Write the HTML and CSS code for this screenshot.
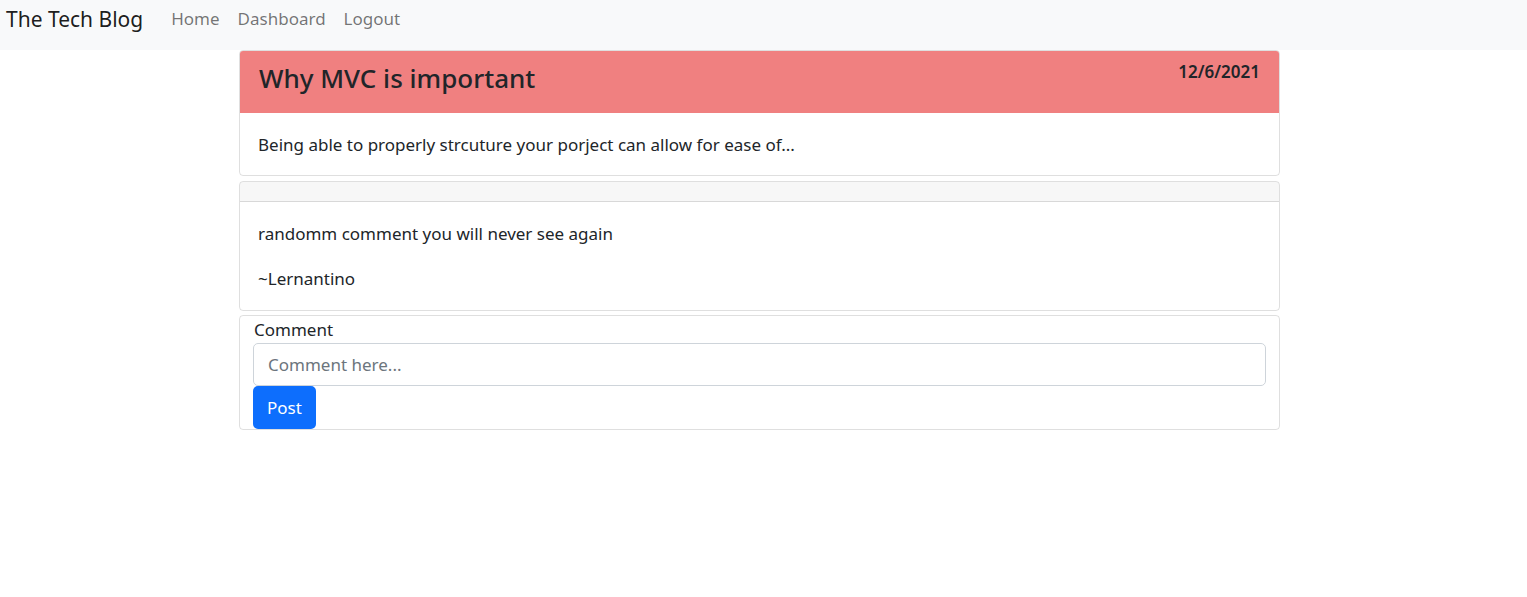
FILE: index.html
```html
<!DOCTYPE html>
<html lang="en">
<head>
    <meta charset="UTF-8">
    <meta name="viewport" content="width=device-width, initial-scale=1.0">
    <title>The Tech Blog</title>
    <link rel="stylesheet" href="styles.css">
</head>
<body>

    <nav class="navbar">
        <a class="navbar-brand" href="#">The Tech Blog</a>
        <a class="nav-link" href="#">Home</a>
        <a class="nav-link" href="#">Dashboard</a>
        <a class="nav-link" href="#">Logout</a>
    </nav>

    <main class="container">
        <!-- Post -->
        <div class="card">
            <div class="card-header post-header">
                <h2>Why MVC is important</h2>
                <span class="post-date">12/6/2021</span>
            </div>
            <div class="card-body post-body">
                <p>Being able to properly strcuture your porject can allow for ease of...</p>
            </div>
        </div>

        <!-- Comments -->
        <div class="card">
            <div class="card-header comment-header"></div>
            <div class="card-body comment-body">
                <p>randomm comment you will never see again</p>
                <p>~Lernantino</p>
            </div>
        </div>

        <!-- New comment form -->
        <form class="card comment-form">
            <label for="comment">Comment</label>
            <input type="text" id="comment" class="form-control" placeholder="Comment here...">
            <button type="submit" class="btn-primary">Post</button>
        </form>
    </main>

</body>
</html>
```

FILE: styles.css
```css
body {
    font-family: "Noto Sans", "Open Sans", sans-serif;
    font-size: 17px;
    line-height: 24px;
    color: #212529;
    margin: 0;
    background-color: #fff;
}

a {
    text-decoration: none;
}

.navbar {
    display: flex;
    align-items: center;
    height: 50px;
    padding: 0 6px;
    background-color: #f8f9fa;
}

.navbar-brand {
    font-size: 21px;
    color: rgba(0, 0, 0, 0.9);
    margin-right: 19px;
    margin-top: -12px;
}

.nav-link {
    color: rgba(0, 0, 0, 0.55);
    padding: 0 9px;
    margin-top: -12px;
}

.container {
    width: 1041px;
    margin-left: 239px;
    display: flex;
    flex-direction: column;
    gap: 5px;
}

.card {
    border: 1px solid rgba(0, 0, 0, 0.125);
    border-radius: 4px;
    overflow: hidden;
}

.post-header {
    background-color: lightcoral;
    display: flex;
    justify-content: space-between;
    align-items: flex-start;
    height: 62px;
    padding: 0 19px 0 19px;
}

.post-header h2 {
    margin: 12px 0 0;
    font-size: 26px;
    font-weight: 500;
    line-height: 1.2;
}

.post-date {
    font-weight: 600;
    margin-top: 9px;
}

.card-body p {
    margin: 0;
}

.post-body {
    padding: 20px 18px 18px;
}

.comment-header {
    height: 19px;
    background-color: rgba(0, 0, 0, 0.03);
    border-bottom: 1px solid rgba(0, 0, 0, 0.125);
}

.comment-body {
    padding: 20px 18px 19px;
}

.comment-body p + p {
    margin-top: 21px;
}

.comment-form {
    display: flex;
    flex-direction: column;
    align-items: flex-start;
    margin-top: -1px;
    padding: 2px 13px 0;
}

.comment-form label {
    margin-left: 1px;
    margin-bottom: 1px;
}

.form-control {
    box-sizing: border-box;
    width: 100%;
    height: 43px;
    padding: 0 14px;
    font: inherit;
    color: #212529;
    border: 1px solid #ced4da;
    border-radius: 5px;
}

.form-control::placeholder {
    color: #6c757d;
}

.btn-primary {
    height: 43px;
    padding: 0 14px;
    font: inherit;
    color: #fff;
    background-color: #0d6efd;
    border: none;
    border-radius: 5px;
    cursor: pointer;
}
```
